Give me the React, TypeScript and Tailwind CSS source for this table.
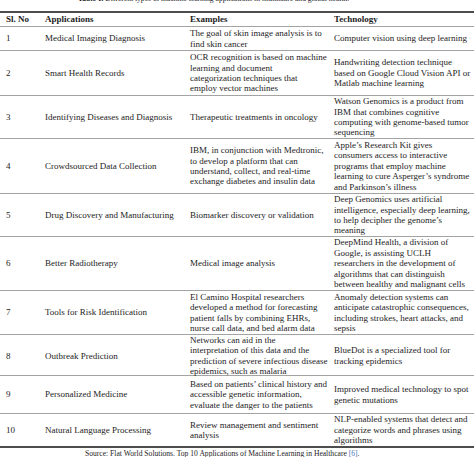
import React from 'react';

type Row = {
  no: string;
  app: string;
  examples: string[];
  tech: string[];
  h: string;
};

// Row heights follow the reference (explicit line breaks keep wrapping stable)
const rows: Row[] = [
  {
    no: '1',
    app: 'Medical Imaging Diagnosis',
    examples: ['The goal of skin image analysis is to', 'find skin cancer'],
    tech: ['Computer vision using deep learning'],
    h: 'h-[24px]',
  },
  {
    no: '2',
    app: 'Smart Health Records',
    examples: [
      'OCR recognition is based on machine',
      'learning and document',
      'categorization techniques that',
      'employ vector machines',
    ],
    tech: ['Handwriting detection technique', 'based on Google Cloud Vision API or', 'Matlab machine learning'],
    h: 'h-[45px]',
  },
  {
    no: '3',
    app: 'Identifying Diseases and Diagnosis',
    examples: ['Therapeutic treatments in oncology'],
    tech: [
      'Watson Genomics is a product from',
      'IBM that combines cognitive',
      'computing with genome-based tumor',
      'sequencing',
    ],
    h: 'h-[43px]',
  },
  {
    no: '4',
    app: 'Crowdsourced Data Collection',
    examples: [
      'IBM, in conjunction with Medtronic,',
      'to develop a platform that can',
      'understand, collect, and real-time',
      'exchange diabetes and insulin data',
    ],
    tech: [
      'Apple\u2019s Research Kit gives',
      'consumers access to interactive',
      'programs that employ machine',
      'learning to cure Asperger\u2019s syndrome',
      'and Parkinson\u2019s illness',
    ],
    h: 'h-[55px]',
  },
  {
    no: '5',
    app: 'Drug Discovery and Manufacturing',
    examples: ['Biomarker discovery or validation'],
    tech: [
      'Deep Genomics uses artificial',
      'intelligence, especially deep learning,',
      'to help decipher the genome\u2019s',
      'meaning',
    ],
    h: 'h-[43px]',
  },
  {
    no: '6',
    app: 'Better Radiotherapy',
    examples: ['Medical image analysis'],
    tech: [
      'DeepMind Health, a division of',
      'Google, is assisting UCLH',
      'researchers in the development of',
      'algorithms that can distinguish',
      'between healthy and malignant cells',
    ],
    h: 'h-[54px]',
  },
  {
    no: '7',
    app: 'Tools for Risk Identification',
    examples: [
      'El Camino Hospital researchers',
      'developed a method for forecasting',
      'patient falls by combining EHRs,',
      'nurse call data, and bed alarm data',
    ],
    tech: [
      'Anomaly detection systems can',
      'anticipate catastrophic consequences,',
      'including strokes, heart attacks, and',
      'sepsis',
    ],
    h: 'h-[44px]',
  },
  {
    no: '8',
    app: 'Outbreak Prediction',
    examples: [
      'Networks can aid in the',
      'interpretation of this data and the',
      'prediction of severe infectious disease',
      'epidemics, such as malaria',
    ],
    tech: ['BlueDot is a specialized tool for', 'tracking epidemics'],
    h: 'h-[41px]',
  },
  {
    no: '9',
    app: 'Personalized Medicine',
    examples: [
      'Based on patients\u2019 clinical history and',
      'accessible genetic information,',
      'evaluate the danger to the patients',
    ],
    tech: ['Improved medical technology to spot', 'genetic mutations'],
    h: 'h-[38px]',
  },
  {
    no: '10',
    app: 'Natural Language Processing',
    examples: ['Review management and sentiment', 'analysis'],
    tech: ['NLP-enabled systems that detect and', 'categorize words and phrases using', 'algorithms'],
    h: 'h-[32px]',
  },
];

const Lines = ({ lines }: { lines: string[] }) => (
  <div className="flex flex-col">
    {lines.map((l, i) => (
      <span key={i} className="whitespace-nowrap">
        {l}
      </span>
    ))}
  </div>
);

const gridCols = 'grid grid-cols-[40px_145px_144px_145px]';

const App = () => {
  return (
    <div
      className="w-[474px] h-[457px] overflow-hidden bg-white text-[#1c1c1c] text-[9px] leading-[10.4px]"
      style={{ fontFamily: '"Liberation Serif", "DejaVu Serif", serif' }}
    >
      {/* caption, cropped at the top edge as in the source */}
      <div className="h-[16px] -mt-[9px] mb-[4px] pl-[78px] flex items-center whitespace-nowrap text-[7.6px]">
        <span className="font-bold">Table 1.</span>
        <span>&nbsp;Different types of machine learning applications in healthcare and global health.</span>
      </div>

      <div className="border-t-2 border-b-2 border-[#4d4d4d]">
        <div className={`${gridCols} h-[14px] border-b border-[#a3a3a3] font-bold items-center`}>
          <div className="pl-[6px]">Sl. No</div>
          <div className="pl-[5px]">Applications</div>
          <div className="pl-[5px]">Examples</div>
          <div className="pl-[5px]">Technology</div>
        </div>

        {rows.map((r, i) => (
          <div
            key={r.no}
            className={`${gridCols} ${r.h} items-center ${i < rows.length - 1 ? 'border-b border-[#a3a3a3]' : ''}`}
          >
            <div className="pl-[6px]">{r.no}</div>
            <div className="pl-[5px] whitespace-nowrap">{r.app}</div>
            <div className="pl-[5px]">
              <Lines lines={r.examples} />
            </div>
            <div className="pl-[5px]">
              <Lines lines={r.tech} />
            </div>
          </div>
        ))}
      </div>

      <div className="pl-[85px] whitespace-nowrap text-[7.6px] leading-[10px] mt-[1px]">
        Source: Flat World Solutions. Top 10 Applications of Machine Learning in Healthcare{' '}
        <span className="text-[#4a73b8]">[6]</span>.
      </div>
    </div>
  );
};

export default App;
